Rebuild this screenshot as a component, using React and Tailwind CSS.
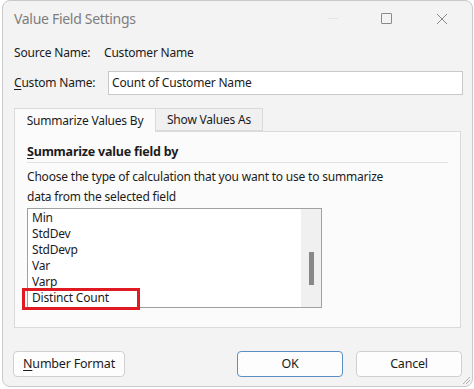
import React from 'react';

const items = ['Min', 'StdDev', 'StdDevp', 'Var', 'Varp', 'Distinct Count'];

const Btn = ({ children, primary, className = '' }) => (
  <button
    className={`h-[26px] rounded-[4px] bg-[#fdfdfd] text-[12.5px] tracking-[-0.2px] text-[#1b1b1b] border ${
      primary ? 'border-[#5a8fc4]' : 'border-[#d0d0d0]'
    } ${className}`}
  >
    {children}
  </button>
);

export default function App() {
  return (
    <div className="w-[474px] h-[389px] bg-white" style={{ fontFamily: '"Noto Sans", "Open Sans", sans-serif' }}>
      <div className="w-[471px] h-[387px] bg-[#f3f3f3] border border-[#c9c9c9] rounded-[8px] ml-[2px] relative text-[#1b1b1b] text-[12px] tracking-[-0.2px]">
        {/* Title bar */}
        <div className="h-[35px] flex items-center pl-[11px]">
          <span className="text-[14px] tracking-[-0.3px] text-[#7d7d7d] leading-none">Value Field Settings</span>
          <div className="ml-auto flex items-center">
            <div className="w-[10px] h-px bg-[#e4e4e4] mr-[43px]" />
            <div className="w-[11px] h-[11px] border border-[#8a8a8a] rounded-[1px] mr-[44px]" />
            <svg width="12" height="12" viewBox="0 0 12 12" className="mr-[24px]">
              <path d="M1 1L11 11M11 1L1 11" stroke="#8a8a8a" strokeWidth="1" />
            </svg>
          </div>
        </div>

        {/* Source name */}
        <div className="flex items-center h-[22px] pl-[11px] mt-[6px] leading-none">
          <span className="w-[90px]">Source Name:</span>
          <span>Customer Name</span>
        </div>

        {/* Custom name */}
        <div className="flex items-center pl-[11px] mt-[7px] leading-none">
          <span className="w-[94px]"><span className="underline underline-offset-2">C</span>ustom Name:</span>
          <div className="w-[355px] h-[24px] bg-white border border-[#c8c8c8] flex items-center pl-[3px]">
            Count of Customer Name
          </div>
        </div>

        {/* Tabs */}
        <div className="ml-[11px] mt-[12px] flex items-end h-[24px] leading-none">
          <div className="w-[142px] h-[24px] bg-[#fbfbfb] border border-b-0 border-[#dadada] flex items-center justify-center relative z-10 translate-y-px">
            Summarize Values By
          </div>
          <div className="w-[107px] h-[23px] bg-[#f0f0f0] border border-l-0 border-[#dadada] flex items-center justify-center">
            Show Values As
          </div>
        </div>
        <div className="ml-[11px] w-[447px] h-[197px] bg-[#fbfbfb] border border-[#dadada] px-[12px] pt-[12px]">
          <div className="font-bold text-[12.5px] leading-[16px]">
            <span className="underline underline-offset-2">S</span>ummarize value field by
          </div>
          <div className="h-px bg-[#e2e2e2] mt-[2px]" />
          <div className="mt-[4px] leading-[20px]">
            Choose the type of calculation that you want to use to summarize
            <br />
            data from the selected field
          </div>
          <div className="mt-[1px] w-[295px] h-[100px] bg-white border border-[#a0a0a0] flex relative">
            <div className="flex-1 pt-[1px] pl-[4px]">
              {items.map((it) => (
                <div key={it} className="h-[16px] leading-[16px]">{it}</div>
              ))}
            </div>
            <div className="w-[20px] bg-[#f0f0f0] flex justify-center">
              <div className="w-[5px] h-[33px] bg-[#888] mt-[43px] ml-[1px]" />
            </div>
            <div className="absolute left-[-6px] top-[79px] w-[118px] h-[22px] border-[3px] border-[#e01a22]" />
          </div>
        </div>

        {/* Buttons */}
        <div className="flex mt-[23px] pl-[10px]">
          <Btn className="w-[112px]"><span className="underline underline-offset-2">N</span>umber Format</Btn>
          <Btn primary className="w-[106px] ml-[112px]">OK</Btn>
          <Btn className="w-[106px] ml-[13px]">Cancel</Btn>
        </div>

        <svg width="10" height="10" viewBox="0 0 10 10" className="absolute right-[1px] bottom-[1px]">
          <path d="M9 2L2 9M9 5L5 9" stroke="#b0b0b0" strokeWidth="1" />
        </svg>
      </div>
    </div>
  );
}
